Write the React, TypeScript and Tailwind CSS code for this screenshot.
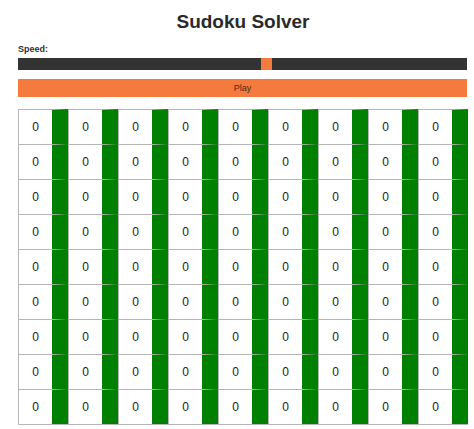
import React from "react";

const rows = Array.from({ length: 9 }, () => Array.from({ length: 9 }, () => 0));

export default function App() {
  return (
    <div className="min-h-screen bg-white text-[#222] font-['Liberation_Sans',Arial,sans-serif]">
      <div className="ml-[18px] w-[450px] flex flex-col">
        {/* Header */}
        <h1 className="text-center text-[19px] font-bold leading-none pt-[12px] h-[45px] text-[#2a2a2a]">
          Sudoku Solver
        </h1>

        <label className="text-[9px] font-bold leading-none h-[13px] text-[#333]">Speed:</label>

        {/* Slider */}
        <div className="flex h-[12px] w-[449px]">
          <div className="w-[243px] bg-[#333]" />
          <div className="w-[11px] bg-[#f47a3d]" />
          <div className="flex-1 bg-[#333]" />
        </div>

        <button className="mt-[9px] h-[18px] w-[449px] bg-[#f47a3d] text-[9px] text-[#4a2a1a] leading-none">
          Play
        </button>

        {/* Board */}
        <div className="mt-[12px] flex flex-col border-b border-[#b5b5b5]">
          {rows.map((row, r) => (
            <div key={r} className="flex">
              {row.map((v, c) => (
                <div
                  key={c}
                  className="w-[50px] h-[35px] flex items-center justify-center border-l border-t border-[#b5b5b5] border-r-[16px] border-r-[#008000] text-[12px]"
                >
                  {v}
                </div>
              ))}
            </div>
          ))}
        </div>
      </div>
    </div>
  );
}
